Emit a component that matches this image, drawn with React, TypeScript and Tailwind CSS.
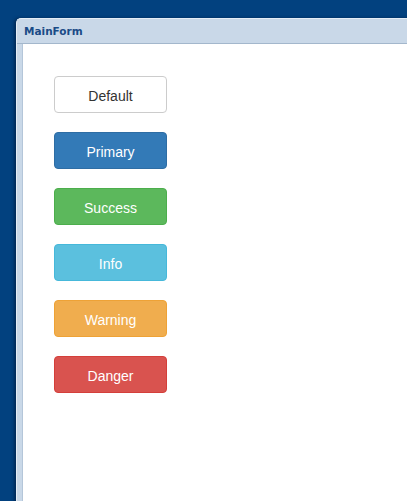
const buttons = [
  { label: "Default", cls: "bg-white border-[#cccccc] text-[#333333]" },
  { label: "Primary", cls: "bg-[#337ab7] border-[#2e6da4] text-white" },
  { label: "Success", cls: "bg-[#5cb85c] border-[#4cae4c] text-white" },
  { label: "Info", cls: "bg-[#5bc0de] border-[#46b8da] text-white" },
  { label: "Warning", cls: "bg-[#f0ad4e] border-[#eea236] text-white" },
  { label: "Danger", cls: "bg-[#d9534f] border-[#d43f3a] text-white" },
];

export default function App() {
  return (
    <div className="h-[501px] w-[407px] overflow-hidden bg-[#02417f] pl-[16px] pt-[18px] font-['Liberation_Sans',sans-serif]">
      <div className="flex h-[520px] w-[420px] flex-col rounded-tl-[5px] border-l border-t border-[#e4edf6] bg-[#c9d8e8] shadow-[-2px_0_3px_rgba(0,20,50,0.5)]">
        {/* title bar */}
        <div className="flex h-[25px] items-center border-b border-[#a3b7cc] px-[7px] pt-[1px]">
          <span className="font-['DejaVu_Sans',sans-serif] text-[10.5px] font-bold text-[#1a4b86]">
            MainForm
          </span>
        </div>
        {/* client area */}
        <div className="flex flex-1 pl-[5px]">
          <div className="flex flex-1 flex-col gap-[19px] border-l border-[#b4c6d9] bg-white pl-[31px] pt-[32px]">
            {buttons.map((b) => (
              <button
                key={b.label}
                type="button"
                className={`flex h-[37px] w-[113px] items-center justify-center rounded-[4px] border pt-[3px] text-[14px] ${b.cls}`}
              >
                {b.label}
              </button>
            ))}
          </div>
        </div>
      </div>
    </div>
  );
}
